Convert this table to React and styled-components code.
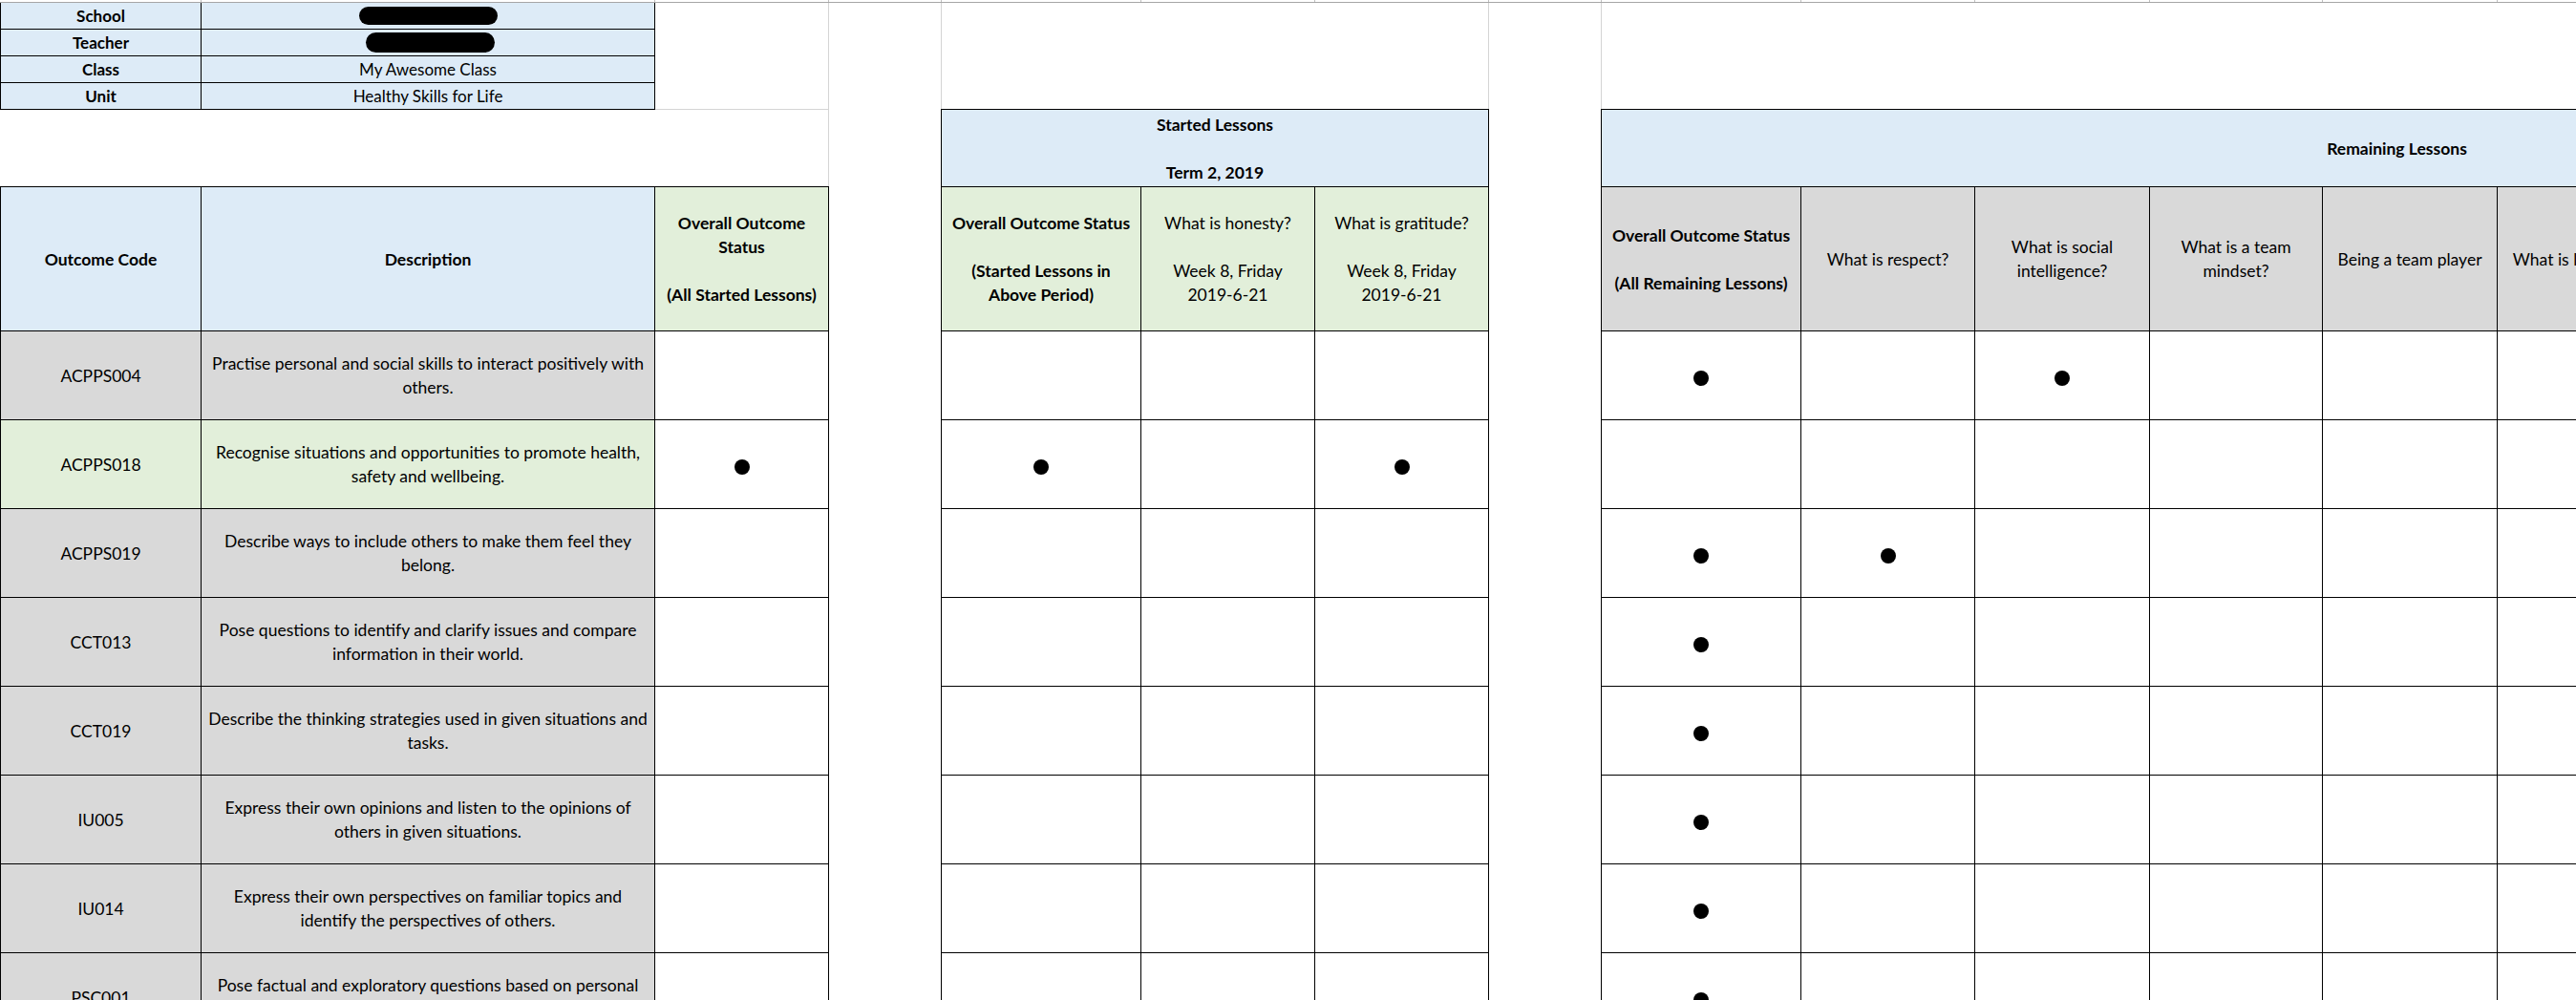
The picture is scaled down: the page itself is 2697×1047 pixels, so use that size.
import React from 'react';
import styled, { createGlobalStyle } from 'styled-components';

const BLUE = '#ddebf7';
const GREEN = '#e2efda';
const GREY = '#d9d9d9';
const GRID = '#d4d4d4';

const GlobalStyle = createGlobalStyle`
  html, body {
    margin: 0;
    padding: 0;
    background: #fff;
    overflow: hidden;
  }
  body {
    font-family: Lato, "Liberation Sans", Arial, sans-serif;
    color: #000;
  }
`;

const Page = styled.div`
  width: max-content;
`;

const ColumnStrip = styled.div`
  display: flex;
  height: 2px;
  border-bottom: 1px solid #a6a6a6;
`;

const Tick = styled.div`
  flex: 0 0 ${(p) => p.$w}px;
  box-sizing: border-box;
  border-right: 1px solid #bfbfbf;
`;

const Sheet = styled.div`
  display: flex;
  align-items: flex-start;
`;

const Block = styled.div`
  display: flex;
  flex-direction: column;
`;

const Gap = styled.div`
  flex: 0 0 117px;
`;

const InfoArea = styled.div`
  display: flex;
`;

const InfoTable = styled.div`
  display: grid;
  grid-template-columns: 209px 474px;
  grid-auto-rows: 27px;
  gap: 1px;
  background: #000;
  border: 1px solid #000;
  border-top: none;
`;

const InfoCell = styled.div`
  display: flex;
  align-items: center;
  justify-content: center;
  background: ${BLUE};
  font-size: 17px;
  font-weight: ${(p) => (p.$bold ? 700 : 400)};
`;

const Redaction = styled.span`
  display: block;
  width: ${(p) => p.$w}px;
  height: ${(p) => p.$h}px;
  background: #000;
  border-radius: ${(p) => p.$h / 2}px;
  margin-left: ${(p) => p.$x}px;
`;

const BlankTop = styled.div`
  box-sizing: border-box;
  width: ${(p) => p.$w}px;
  height: ${(p) => p.$h}px;
  border-left: ${(p) => (p.$left ? `1px solid ${GRID}` : 'none')};
  border-right: ${(p) => (p.$right ? `1px solid ${GRID}` : 'none')};
  border-bottom: ${(p) => (p.$bottom ? `1px solid ${GRID}` : 'none')};
`;

const Table = styled.div`
  display: grid;
  grid-template-columns: ${(p) => p.$cols.map((c) => `${c}px`).join(' ')};
  grid-template-rows: ${(p) => (p.$band ? '80px ' : '')}150px;
  grid-auto-rows: 92px;
  gap: 1px;
  background: #000;
  border: 1px solid #000;
`;

const Band = styled.div`
  grid-column: 1 / -1;
  display: flex;
  align-items: center;
  justify-content: center;
  background: ${BLUE};
  font-size: 17.5px;
  font-weight: 700;
  line-height: 25px;
  white-space: pre;
  text-align: center;
`;

const Cell = styled.div`
  display: flex;
  align-items: center;
  justify-content: center;
  background: ${(p) => p.$bg || '#fff'};
  font-size: ${(p) => (p.$bold ? 17.5 : 17.5)}px;
  font-weight: ${(p) => (p.$bold ? 700 : 400)};
  line-height: 25px;
  text-align: center;
  white-space: pre;
  overflow: hidden;
`;

const Dot = styled.span`
  width: 16px;
  height: 16px;
  border-radius: 50%;
  background: #000;
  margin-top: 6px;
`;

const ticks = [211, 475, 182, 118, 209, 182, 182, 118, 209, 182, 183, 181, 183, 182, 182, 182, 182];

const outcomes = [
  {
    code: 'ACPPS004',
    text: 'Practise personal and social skills to interact positively with\nothers.',
    started: [false, false, false],
    remaining: [true, false, true],
  },
  {
    code: 'ACPPS018',
    text: 'Recognise situations and opportunities to promote health,\nsafety and wellbeing.',
    highlight: true,
    overall: true,
    started: [true, false, true],
    remaining: [],
  },
  {
    code: 'ACPPS019',
    text: 'Describe ways to include others to make them feel they\nbelong.',
    started: [false, false, false],
    remaining: [true, true],
  },
  {
    code: 'CCT013',
    text: 'Pose questions to identify and clarify issues and compare\ninformation in their world.',
    started: [false, false, false],
    remaining: [true],
  },
  {
    code: 'CCT019',
    text: 'Describe the thinking strategies used in given situations and\ntasks.',
    started: [false, false, false],
    remaining: [true],
  },
  {
    code: 'IU005',
    text: 'Express their own opinions and listen to the opinions of\nothers in given situations.',
    started: [false, false, false],
    remaining: [true],
  },
  {
    code: 'IU014',
    text: 'Express their own perspectives on familiar topics and\nidentify the perspectives of others.',
    started: [false, false, false],
    remaining: [true],
  },
  {
    code: 'PSC001',
    text: 'Pose factual and exploratory questions based on personal\ninterests and experiences.',
    started: [false, false, false],
    remaining: [true],
  },
];

const startedHeads = [
  { text: 'Overall Outcome Status\n\n(Started Lessons in\nAbove Period)', bold: true },
  { text: 'What is honesty?\n\nWeek 8, Friday\n2019-6-21' },
  { text: 'What is gratitude?\n\nWeek 8, Friday\n2019-6-21' },
];

const remainingHeads = [
  { text: 'Overall Outcome Status\n\n(All Remaining Lessons)', bold: true },
  { text: 'What is respect?' },
  { text: 'What is social\nintelligence?' },
  { text: 'What is a team\nmindset?' },
  { text: 'Being a team player' },
  { text: 'What is leadership?' },
  { text: 'What is empathy?' },
  { text: 'What is resilience?' },
  { text: 'What is kindness?' },
];

const remainingCols = [208, 181, 182, 180, 182, 181, 181, 181, 181];

const App = () => {
  return (
    <Page>
      <GlobalStyle />
      <ColumnStrip>
        {ticks.map((w, i) => (
          <Tick key={i} $w={w} />
        ))}
      </ColumnStrip>
      <Sheet>
        <Block>
          <InfoArea>
            <InfoTable>
              <InfoCell $bold>School</InfoCell>
              <InfoCell>
                <Redaction $w={145} $h={19} $x={0} />
              </InfoCell>
              <InfoCell $bold>Teacher</InfoCell>
              <InfoCell>
                <Redaction $w={135} $h={21} $x={4} />
              </InfoCell>
              <InfoCell $bold>Class</InfoCell>
              <InfoCell>My Awesome Class</InfoCell>
              <InfoCell $bold>Unit</InfoCell>
              <InfoCell>Healthy Skills for Life</InfoCell>
            </InfoTable>
            <BlankTop $w={182} $h={112} $right $bottom />
          </InfoArea>
          <BlankTop $w={868} $h={80} $right />
          <Table $cols={[209, 474, 181]}>
            <Cell $bg={BLUE} $bold>Outcome Code</Cell>
            <Cell $bg={BLUE} $bold>Description</Cell>
            <Cell $bg={GREEN} $bold>{'Overall Outcome\nStatus\n\n(All Started Lessons)'}</Cell>
            {outcomes.map((o) => (
              <React.Fragment key={o.code}>
                <Cell $bg={o.highlight ? GREEN : GREY}>{o.code}</Cell>
                <Cell $bg={o.highlight ? GREEN : GREY}>{o.text}</Cell>
                <Cell>{o.overall && <Dot />}</Cell>
              </React.Fragment>
            ))}
          </Table>
        </Block>
        <Gap />
        <Block>
          <BlankTop $w={574} $h={111} $left $right />
          <Table $cols={[208, 181, 181]} $band>
            <Band>{'Started Lessons\n\nTerm 2, 2019'}</Band>
            {startedHeads.map((h, i) => (
              <Cell key={i} $bg={GREEN} $bold={h.bold}>
                {h.text}
              </Cell>
            ))}
            {outcomes.map((o) =>
              o.started.map((on, i) => <Cell key={`${o.code}-s${i}`}>{on && <Dot />}</Cell>)
            )}
          </Table>
        </Block>
        <Gap />
        <Block>
          <BlankTop $w={600} $h={111} $left />
          <Table $cols={remainingCols} $band>
            <Band>Remaining Lessons</Band>
            {remainingHeads.map((h, i) => (
              <Cell key={i} $bg={GREY} $bold={h.bold}>
                {h.text}
              </Cell>
            ))}
            {outcomes.map((o) =>
              remainingCols.map((_, i) => (
                <Cell key={`${o.code}-r${i}`}>{o.remaining[i] && <Dot />}</Cell>
              ))
            )}
          </Table>
        </Block>
      </Sheet>
    </Page>
  );
};

export default App;
